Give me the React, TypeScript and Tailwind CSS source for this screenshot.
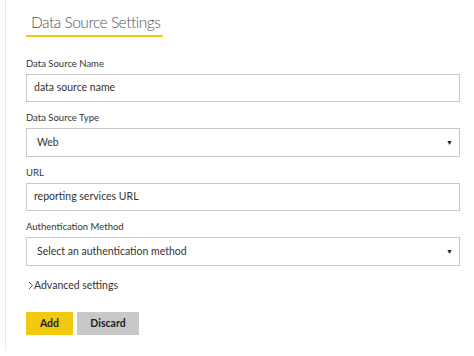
import React from "react"

const font = { fontFamily: 'Lato, "Open Sans", sans-serif' }

function Field({ label, children }: { label: string; children: React.ReactNode }) {
  return (
    <div className="flex flex-col">
      <label className="text-[9.5px] leading-[12px] text-[#333] mb-[4px]">{label}</label>
      {children}
    </div>
  )
}

function TextBox({ value }: { value: string }) {
  return (
    <div className="h-[28px] w-[434px] border border-[#c8c8c8] bg-white flex items-center pl-[7px] text-[10.5px] text-[#333]">
      {value}
    </div>
  )
}

function SelectBox({ value }: { value: string }) {
  return (
    <div className="h-[29px] w-[434px] border border-[#c8c8c8] bg-white flex items-center pl-[10px] pr-[6px] text-[10.5px] text-[#333]">
      <span className="flex-1">{value}</span>
      <span className="text-[7px] text-[#222]">▼</span>
    </div>
  )
}

export default function App() {
  return (
    <div className="w-[474px] h-[356px] bg-white overflow-hidden" style={font}>
      <div className="ml-[5px] h-[350px] border-l border-[#e8e8e8] pl-[20px] pt-[10px]">
        <div className="inline-block border-b-2 border-[#f2c811] px-[5px] pb-[3px] w-[137px]">
          <h1 className="text-[15.5px] leading-[20px] font-light tracking-[-0.5px] text-[#555] whitespace-nowrap">Data Source Settings</h1>
        </div>

        <div className="mt-[21px] flex flex-col gap-[10px]">
          <Field label="Data Source Name">
            <TextBox value="data source name" />
          </Field>
          <Field label="Data Source Type">
            <SelectBox value="Web" />
          </Field>
          <Field label="URL">
            <TextBox value="reporting services URL" />
          </Field>
          <Field label="Authentication Method">
            <SelectBox value="Select an authentication method" />
          </Field>
        </div>

        <div className="mt-[11px] flex items-center text-[10.5px] leading-[16px] text-[#333]">
          <svg width="6" height="9" viewBox="0 0 6 9" className="ml-[2px]">
            <path d="M1 1 L4.5 4.5 L1 8" fill="none" stroke="#444" strokeWidth="0.9" />
          </svg>
          <span>Advanced settings</span>
        </div>

        <div className="mt-[19px] flex gap-[4px]">
          <button className="h-[23px] w-[47px] bg-[#f2c811] text-[10.5px] font-bold text-[#222]">Add</button>
          <button className="h-[23px] w-[62px] bg-[#c8c8c8] text-[10.5px] font-bold text-[#222]">Discard</button>
        </div>
      </div>
    </div>
  )
}
